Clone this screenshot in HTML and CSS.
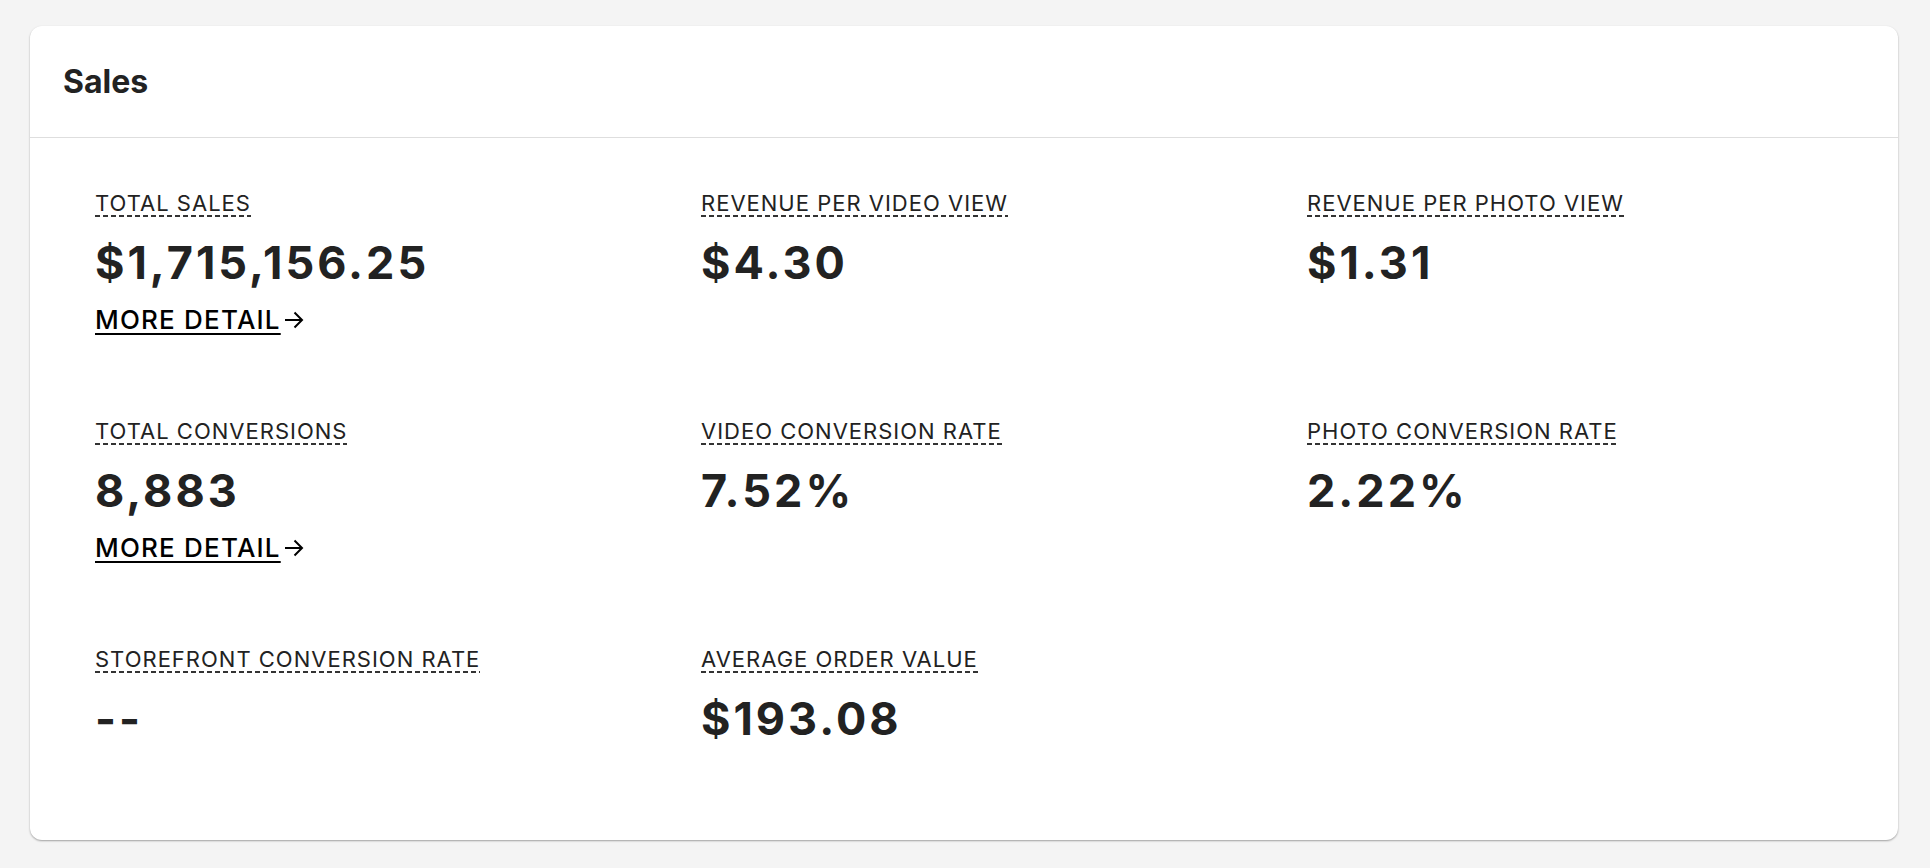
FILE: index.html
```html
<!DOCTYPE html>
<html lang="en">

<head>
    <meta charset="UTF-8">
    <meta name="viewport" content="width=device-width, initial-scale=1.0">
    <title>Sales</title>
    <link rel="stylesheet" href="styles.css">
</head>

<body>
    <div class="card">
        <div class="card-header">Sales</div>

        <div class="stats">
            <div class="stat">
                <span class="stat-label">TOTAL SALES</span>
                <div class="stat-value">$1,715,156.25</div>
                <a class="more-detail" href="#"><span>MORE DETAIL</span>
                    <svg width="22" height="22" viewBox="0 0 22 22"><path d="M2 11h17M11.5 3.5l7.5 7.5-7.5 7.5" fill="none" stroke="#000" stroke-width="2"/></svg>
                </a>
            </div>
            <div class="stat">
                <span class="stat-label">REVENUE PER VIDEO VIEW</span>
                <div class="stat-value">$4.30</div>
            </div>
            <div class="stat">
                <span class="stat-label">REVENUE PER PHOTO VIEW</span>
                <div class="stat-value">$1.31</div>
            </div>

            <div class="stat">
                <span class="stat-label">TOTAL CONVERSIONS</span>
                <div class="stat-value">8,883</div>
                <a class="more-detail" href="#"><span>MORE DETAIL</span>
                    <svg width="22" height="22" viewBox="0 0 22 22"><path d="M2 11h17M11.5 3.5l7.5 7.5-7.5 7.5" fill="none" stroke="#000" stroke-width="2"/></svg>
                </a>
            </div>
            <div class="stat">
                <span class="stat-label">VIDEO CONVERSION RATE</span>
                <div class="stat-value">7.52%</div>
            </div>
            <div class="stat">
                <span class="stat-label">PHOTO CONVERSION RATE</span>
                <div class="stat-value">2.22%</div>
            </div>

            <div class="stat">
                <span class="stat-label">STOREFRONT CONVERSION RATE</span>
                <div class="stat-value">--</div>
            </div>
            <div class="stat">
                <span class="stat-label">AVERAGE ORDER VALUE</span>
                <div class="stat-value">$193.08</div>
            </div>
        </div>
    </div>
</body>

</html>
```

FILE: styles.css
```css
body {
    margin: 0;
    padding: 26px 32px 28px 30px;
    background-color: #f4f4f4;
    font-family: Inter, "Noto Sans", sans-serif;
    color: #222;
}

.card {
    background-color: #fff;
    border-radius: 12px;
    box-shadow: 0 1px 2px rgba(0, 0, 0, 0.35);
    height: 814px;
    box-sizing: border-box;
}

.card-header {
    height: 112px;
    box-sizing: border-box;
    padding-left: 33px;
    display: flex;
    align-items: center;
    font-size: 32px;
    font-weight: 700;
    border-bottom: 1px solid #dedede;
}

.stats {
    display: grid;
    grid-template-columns: repeat(3, 1fr);
    column-gap: 80px;
    row-gap: 79px;
    padding: 51px 65px 0 65px;
}

.stat {
    display: flex;
    flex-direction: column;
    align-items: flex-start;
}

/* dashed underline drawn as a repeating strip so the dashes match */
.stat-label {
    font-size: 22px;
    line-height: 28px;
    letter-spacing: 1px;
    background-image: linear-gradient(to right, #333 5px, transparent 5px);
    background-size: 8px 2px;
    background-repeat: repeat-x;
    background-position: left bottom;
}

.stat-value {
    font-size: 45px;
    font-weight: 700;
    line-height: 54px;
    letter-spacing: 3px;
    margin-top: 19px;
}

.more-detail {
    display: flex;
    align-items: center;
    margin-top: 12px;
    color: #000;
    font-size: 26px;
    font-weight: 450;
    line-height: 36px;
    letter-spacing: 1.2px;
    text-decoration: none;
}

.more-detail span {
    text-decoration: underline;
    text-underline-offset: 4px;
    text-decoration-thickness: 2px;
}

.more-detail svg {
    margin-left: 2px;
}
```
